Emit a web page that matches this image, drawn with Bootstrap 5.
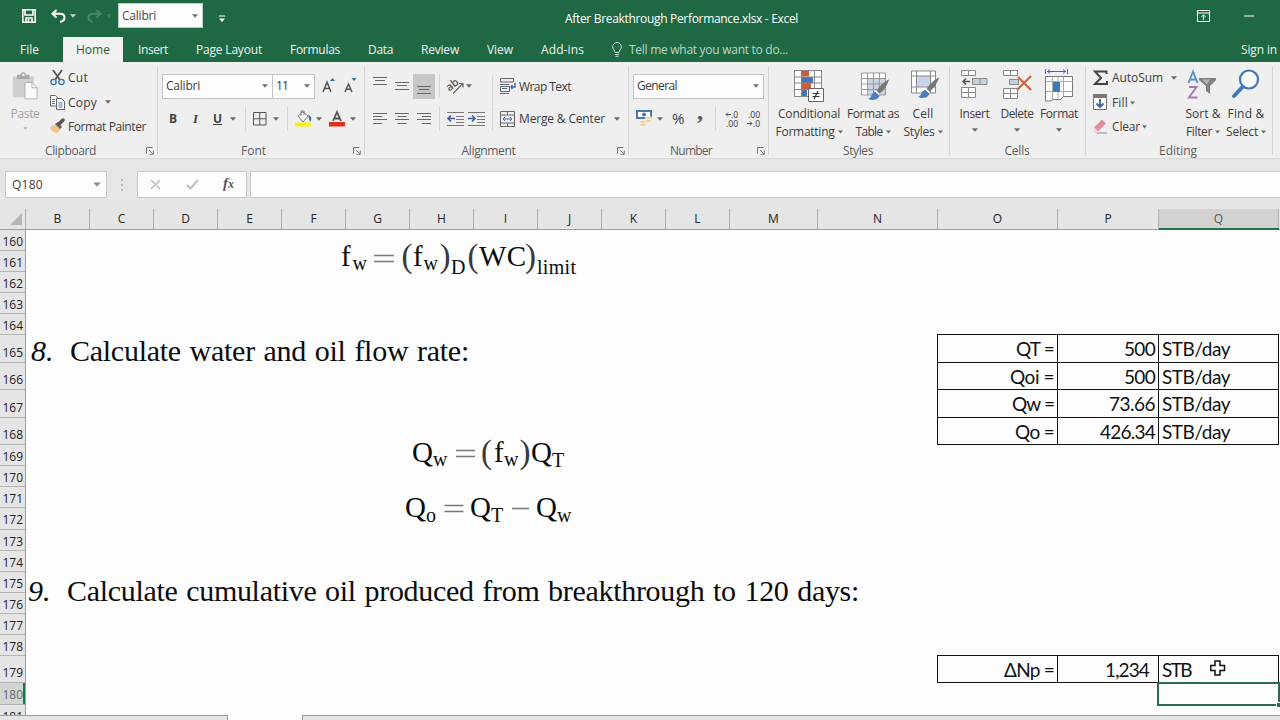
<!DOCTYPE html>
<html lang="en">
<head>
<meta charset="utf-8">
<meta name="viewport" content="width=device-width, initial-scale=1">
<title>After Breakthrough Performance.xlsx - Excel</title>
<link rel="stylesheet" href="https://cdn.jsdelivr.net/npm/bootstrap@5.3.0/dist/css/bootstrap.min.css">
<style>
:root{--xl:#1e6844}
body{width:1280px;height:720px;font-family:"Open Sans","Noto Sans",sans-serif;font-size:12px;line-height:16px;color:#3c3c3c;background:#e5e5e5}
svg{display:block;flex:none;overflow:visible}
span,a{white-space:nowrap}
.app{width:1280px;height:720px}
.g{display:grid;align-items:center;justify-items:start}
/* title bar */
.titlebar{height:37px;background:var(--xl);color:#fff;grid-template-columns:21px 30px 19px 17px 19px 12px 101px 346px 632px 47px 36px}
.titlebar>*{margin-top:-6px}
.titlebar .ttl{margin-top:1px}
.qfont{width:85px;height:25px;background:#fdfdfd;border:1px solid #b9cfc2;color:#444;padding:0 4px 0 3px}
/* tabs */
.tabs{height:25px;background:var(--xl);color:#eef5f0;grid-template-columns:20px 43px 75px 58px 94px 78px 53px 66px 54px 71px 17px 612px 39px}
.tabs .home{background:#f1f1f1;color:#2a5f45;width:60px;height:25px;padding:5px 0 0 13px}
.tabs .dim{color:#bcd8c8}
/* ribbon */
.ribbon{height:97px;background:#efefef;border-bottom:1px solid #dadada}
.grp{position:relative;height:96px;padding-top:4px}
.grp::after{content:"";position:absolute;right:0;top:5px;height:88px;width:1px;background:#d2d2d2}
.grp .cap{position:absolute;left:0;right:0;bottom:-2px;color:#5c5c5c;height:17px}
.launch{position:absolute;right:4px;bottom:3px}
.w1{width:158px}.w2{width:207px}.w3{width:264px}.w4{width:140px}.w5{width:181px}.w6{width:136px}.w7{width:187px}
.r1{height:40px}.r2{height:25px}
.clip{grid-template-columns:50px 18px 35px 20px;grid-template-rows:24px 24px 24px}
.fbox{height:25px;background:#fdfdfd;border:1px solid #c3c3c3;padding:0 4px 0 3px}
.bigbtn{height:74px}
.bigbtn .ico{height:40px;padding-top:3px}
.bigbtn .ln{height:17px;gap:3px}
.font1{grid-template-columns:4px 111px 49px 22px 20px}
.font2{grid-template-columns:12px 23px 21px 16px 15px 8px 20px 14px 8px 24px 10px 21px 10px}
.font2 b,.font2 i{color:#444}
.fb{border-left-width:0}
.vsep{width:1px;height:24px;background:#d5d5d5}
.al1,.al2{grid-template-columns:8px 22px 18px 26px 8px 19px 26px 8px 19px 95px 10px}
.al2 .c3{padding-left:4px}
.hot{width:22px;height:25px;background:#c6c6c6;padding:0 4px}
.num2{grid-template-columns:7px 21px 15px 24px 19px 8px 22px 18px}
.dec b{font-weight:400;font-size:8.5px;line-height:9px;height:9px;color:#333}
.edit{grid-template-columns:7px 19px 60px;grid-template-rows:24px 24px 24px}
.clip>.low,.edit .low{padding-top:1px}
/* formula bar */
.fbar{height:46px;background:#e6e6e6;padding:12px 0 0 5px}
.fbar .bx{height:27px;background:#fdfdfd;border:1px solid #c8c8c8}
/* headers */
.heads{height:25px;background:#e5e5e5;border-bottom:1px solid #9d9d9d;color:#222}
.heads div{height:20px;margin-top:4px;border-right:1px solid #b0b0b0;text-align:center;padding-top:2px}
.c26{width:26px}.c64{width:64px}.c88{width:88px}.c120{width:120px}.c101{width:101px}
.heads .selc{background:#d2d2d2;color:#555;box-shadow:0 2px 0 #217346;height:19px;margin-top:4px}
.rows{width:26px;height:485px;background:#e5e5e5;border-right:1px solid #9d9d9d;overflow:hidden;color:#222}
.rows div{height:21px;flex:none;border-bottom:1px solid #b3b3b3;padding-left:2.5px;display:flex;align-items:flex-end;line-height:17px}
.rows .h28{height:28px;line-height:19px}.rows .h27{height:27px;line-height:19px}.rows .h22{height:22px;line-height:19px}
.rows .selr{background:#d2d6d3;color:#666;box-shadow:inset -2px 0 0 #217346}
.canvas{height:485px;background:#fdfdfd;position:relative;overflow:hidden}
.notes{width:911px;font-family:"Liberation Serif",serif;font-size:30px;line-height:34px;color:#0c0c0c}
.notes span{word-spacing:1.5px}
.notes text{font-family:"Liberation Serif",serif;font-size:29px;fill:#0c0c0c}
.notes .sb{font-size:20px}
.notes .par{font-size:33px;fill:#3a3a3a}
.eqs{stroke:#777;stroke-width:1.3}
.cells{font-family:Lato,sans-serif;font-size:19px;line-height:27px;color:#111}
.tb{border-top:1px solid #111;border-left:1px solid #111;width:342px}
.tb>div{grid-template-columns:120px 101px 120px;height:27px;border-bottom:1px solid #111}
.tb>.t28{height:28px}
.tb>div>span{border-right:1px solid #111;width:100%;height:100%;padding:0 3px;text-align:right;overflow:hidden}
.tb>div>span:last-child{text-align:left}
.cells .t0{margin-top:104px}.cells .t1{margin-top:210px}
.tb .acct{padding-right:9px!important}
.selbox{position:absolute;left:1131px;top:452px;width:123px;height:24px;border:2px solid #2c6b4f}
.selbox::after{content:"";position:absolute;right:-3px;bottom:-3px;width:5px;height:5px;background:#2c6b4f;border:solid #fdfdfd;border-width:1px 0 0 1px}
.cursor{position:absolute;left:1184px;top:430px}
.foot{height:5px;background:#fdfdfd}
.foot div{height:5px;background:#e5e5e5;border-top:1px solid #9d9d9d}
.f1{width:228px;border-right:1px solid #9d9d9d}.f2{width:978px;border-left:1px solid #9d9d9d}
</style>
<script src="https://cdn.jsdelivr.net/npm/bootstrap@5.3.0/dist/js/bootstrap.bundle.min.js"></script>
</head>
<body>
<svg width="0" height="0" class="position-absolute">
<defs>
<symbol id="car" viewBox="0 0 6 4"><path d="M0 .3h6L3 3.7z" fill="currentColor" opacity=".75"/></symbol>
<symbol id="lau" viewBox="0 0 8 8"><path d="M.5 6.500V.5h6M3 3l4 4M7.300 3.500v3.800H3.500" fill="none" stroke="#777"/></symbol>
<symbol id="brush" viewBox="0 0 24 24"><path d="M23 1C18 3 13 8 10 13l3 3C18 12 21 7 23 1z" fill="#777"/><path d="M9 14c-5 0-3 6-8 7 5 3 12 1 12-4z" fill="#4a7fc0"/><path d="M9 13l4 4" stroke="#fff" stroke-width="1.500"/></symbol>
</defs>
</svg>
<div class="app d-flex flex-column overflow-hidden">
<header>
<div class="titlebar g">
<i></i>
<svg width="16" height="16" viewBox="0 0 16 16" fill="none" stroke="#fff" stroke-width="1.600"><path d="M1.800 1.800h12.400v12.400H1.800zM4 2v5h8V2M5 14v-4h6v4M7.500 11v3"/></svg>
<svg width="15" height="14" viewBox="0 0 15 14" fill="none" stroke="#fff" stroke-width="2"><path d="M5.500 1L1.500 4.800l4 3.800M2 4.800h7c6 0 6 7 0 8"/></svg>
<svg width="6" height="4" color="#fff"><use href="#car"/></svg>
<svg width="15" height="14" viewBox="0 0 15 14" fill="none" stroke="#498468" stroke-width="2"><path d="M9.500 1l4 3.800-4 3.800M13 4.800H6c-6 0-6 7 0 8"/></svg>
<svg width="6" height="4" color="#498468"><use href="#car"/></svg>
<div class="qfont d-flex align-items-center justify-content-between"><span data-w="33">Calibri</span><svg width="6" height="4"><use href="#car"/></svg></div>
<svg width="6" height="8" viewBox="0 0 6 8" class="mt-0"><path d="M0 1h6" stroke="#fff"/><path d="M0 3.500h6L3 7z" fill="#fff"/></svg>
<span class="ttl" data-w="232">After Breakthrough Performance.xlsx - Excel</span>
<svg width="13" height="12" viewBox="0 0 13 12" fill="none" stroke="#fff" stroke-width="1"><path d="M.5.5h12v11H.5zM.5 3h12M6.500 10V5M4.300 7l2.200-2.200L8.700 7"/></svg>
<svg width="10" height="2" viewBox="0 0 10 2"><path d="M0 1h10" stroke="#fff"/></svg>
</div>
<nav class="tabs g">
<i></i><span data-w="18" style="padding-top:1px">File</span>
<span class="home" ><span data-w="33">Home</span></span>
<span data-w="29">Insert</span><span data-w="65">Page Layout</span><span data-w="49">Formulas</span><span data-w="24">Data</span><span data-w="37">Review</span><span data-w="25">View</span><span data-w="42">Add-ins</span>
<svg width="10" height="15" viewBox="0 0 10 15" fill="none" stroke="#cfe3d8"><path d="M3 10.500c0-2-2.300-3-2.300-5.700a4.300 4.300 0 0 1 8.600 0c0 2.700-2.300 3.700-2.300 5.700zM3 12.500h4M3.500 14.300h3"/></svg>
<span class="dim" data-w="158">Tell me what you want to do...</span><span data-w="35">Sign in</span>
</nav>
</header>

<div class="ribbon d-flex">
<section class="grp w1">
<div class="clip g">
<div class="bigbtn" style="grid-row:1/4;align-self:start;width:50px;color:#a3a3a3">
<div class="ico ps-0"><svg width="30" height="33" viewBox="0 0 30 33" class="ms-2 ps-1"><path d="M1 6h24v24H1z" fill="#cfcdcf"/><path d="M6 9V4h4c0-4 6-4 6 0h4v5z" fill="#a9a9a9"/><circle cx="13" cy="4" r="1.500" fill="#eee"/><path d="M15 13h8l6 6v13H15z" fill="#fafafa" stroke="#aaa"/><path d="M23 13v6h6" fill="none" stroke="#aaa"/></svg></div>
<div class="ln d-flex justify-content-center"><span data-w="28">Paste</span></div>
<div class="d-flex justify-content-center pt-1"><svg width="5" height="3"><use href="#car"/></svg></div>
</div>
<svg width="15" height="16" viewBox="0 0 15 16" fill="none"><path d="M3 0l7 10M12 0L5 10" stroke="#555" stroke-width="1.800"/><circle cx="3.500" cy="12" r="2.600" stroke="#3f78b8" stroke-width="1.400"/><circle cx="11.500" cy="12" r="2.600" stroke="#3f78b8" stroke-width="1.400"/></svg>
<span data-w="19">Cut</span><i></i>
<svg width="15" height="15" viewBox="0 0 15 15" fill="#fafafa" stroke="#666"><path d="M.5.5h5l2.500 2.500v8H.5z"/><path d="M6.500 3.500h5l3 3v8h-8z"/><path d="M2 4.500h3M2 6.500h3M2 8.500h3M8.500 8h4M8.500 10h4M8.500 12h4" stroke="#4a7ab5"/></svg>
<span class="low" data-w="28">Copy</span><svg width="6" height="4" style="margin-left:2px"><use href="#car"/></svg>
<svg width="15" height="15" viewBox="0 0 15 15"><path d="M0 8l6-3 5 5-4 4c-3 0-6-2-7-6z" fill="#efc68f"/><path d="M5 5l3-2 4 5-2 2z" fill="#6a6260"/><path d="M9 5l4-4" stroke="#555" stroke-width="3.500" stroke-linecap="round"/></svg>
<span class="low" data-w="77">Format Painter</span><i></i>
</div>
<div class="cap ps-5"><span data-w="50" style="margin-left:-3px">Clipboard</span></div><svg class="launch" width="8" height="8"><use href="#lau"/></svg>
</section>

<section class="grp w2">
<div class="g r1 font1"><i></i>
<div class="fbox w-100 d-flex align-items-center justify-content-between"><span data-w="33">Calibri</span><svg width="6" height="4"><use href="#car"/></svg></div>
<div class="fbox fb d-flex align-items-center justify-content-between" style="width:42px"><span data-w="11">11</span><svg width="6" height="4"><use href="#car"/></svg></div>
<svg width="14" height="16" viewBox="0 0 14 16"><path d="M1 14L5 4l4 10M2.500 10.500h5" fill="none" stroke="#555" stroke-width="1.500"/><path d="M8 3l2.500-3L13 3z" fill="#3f6ca8"/></svg>
<svg width="14" height="16" viewBox="0 0 14 16"><path d="M1 14l3.500-8L8 14M2.500 11.300h4" fill="none" stroke="#555" stroke-width="1.500"/><path d="M7.500 0h5L10 3z" fill="#3f6ca8"/></svg>
</div>
<div class="g r2"><div class="g font2"><i></i><b style="margin-left:-1px">B</b><i class="fw-bold" style="font-family:'Liberation Serif',serif;font-size:13px">I</i><b style="margin-left:-1px"><u>U</u></b><svg width="6" height="4"><use href="#car"/></svg><div class="vsep"></div>
<svg width="14" height="14" viewBox="0 0 14 14" fill="none" stroke="#555"><path d="M.5.5h12.500v12.500H.5zM6.750.5v12.500M.5 6.750h12.500"/></svg>
<svg width="6" height="4"><use href="#car"/></svg><div class="vsep"></div>
<svg width="17" height="17" viewBox="0 0 17 17"><path d="M3 6l5-4 5 4-5 6z" fill="#fff" stroke="#777"/><path d="M6 6V1h3v4" fill="none" stroke="#777"/><path d="M13 5c4 1 4 5 2 7z" fill="#3f6ca8"/><path d="M0 12.500h16v4H0z" fill="#fdee10"/></svg>
<svg width="6" height="4" style="margin-left:-3px"><use href="#car"/></svg>
<svg width="16" height="16" viewBox="0 0 16 16"><path d="M4 10L8 1l4 9M5.500 7.500h5" fill="none" stroke="#555" stroke-width="1.800"/><path d="M0 11h16v4.500H0z" fill="#e03018"/></svg>
<svg width="6" height="4"><use href="#car"/></svg></div></div>
<div class="cap text-center" style="right:16px"><span data-w="24">Font</span></div><svg class="launch" width="8" height="8"><use href="#lau"/></svg>
</section>

<section class="grp w3">
<div class="g r1 al1"><i></i>
<svg width="14" height="11" viewBox="0 0 14 11" stroke="#666" style="margin-top:-7px"><path d="M0 .5h14M2 3.500h10M0 7.500h14"/></svg>
<svg width="14" height="8" viewBox="0 0 14 8" stroke="#666" style="margin-top:-1px"><path d="M0 .5h14M2 3.500h10M0 7.500h14"/></svg>
<div class="hot"><svg width="14" height="25" viewBox="0 0 14 25" stroke="#666"><path d="M0 12.500h14M2 15.500h10M0 19.500h14"/></svg></div>
<div class="vsep"></div>
<svg width="17" height="16" viewBox="0 0 17 16"><text x="0" y="11" transform="rotate(-38 5 9)" font-size="11" font-weight="600" fill="#555">ab</text><path d="M6 15.500L15.500 6M12 5.500h4v4" fill="none" stroke="#666" stroke-width="1.200"/></svg>
<svg width="6" height="4"><use href="#car"/></svg><div class="vsep" style="height:30px;align-self:end"></div>
<svg width="16" height="16" viewBox="0 0 16 16" fill="none" stroke="#666"><path d="M.5.5h13v3.500H.5zM0 6.500h9M.5 8.500h9v5H.5zM0 15.500h9"/><path d="M2 10.500h5" stroke="#3f6ca8"/><path d="M15 5v4h-4M12.500 7L11 9l1.500 2" stroke="#3f6ca8" stroke-width="1.400"/></svg>
<span data-w="51" style="padding-top:1px">Wrap Text</span><i></i>
</div>
<div class="g r2 al2"><i></i>
<svg width="14" height="11" viewBox="0 0 14 11" stroke="#666"><path d="M0 .5h14M0 3.500h9M0 6.500h14M0 10.500h9"/></svg>
<svg width="14" height="11" viewBox="0 0 14 11" stroke="#666"><path d="M0 .5h14M2.500 3.500h9M0 6.500h14M2.500 10.500h9"/></svg>
<div class="c3"><svg width="14" height="11" viewBox="0 0 14 11" stroke="#666"><path d="M0 .5h14M5 3.500h9M0 6.500h14M5 10.500h9"/></svg></div>
<div class="vsep"></div>
<svg width="17" height="14" viewBox="0 0 17 14" fill="none" stroke="#777"><path d="M0 .5h17M9 4.500h8M9 7.500h8M9 10.500h8M0 13.500h17"/><path d="M1 6.500h7M4 3.500l-3 3 3 3" stroke="#3f5f9a" stroke-width="1.600"/></svg>
<svg width="17" height="14" viewBox="0 0 17 14" fill="none" stroke="#777" style="margin-left:2px"><path d="M0 .5h17M9 4.500h8M9 7.500h8M9 10.500h8M0 13.500h17"/><path d="M0 6.500h7M4 3.500l3 3-3 3" stroke="#3f5f9a" stroke-width="1.600"/></svg>
<div class="vsep"></div>
<svg width="15" height="16" viewBox="0 0 15 16" fill="none" stroke="#666"><path d="M.5.5h14v15H.5zM.5 4h14M.5 12h14M7.500.5V4M7.500 12v3.500"/><path d="M3 8h9M5 6L3 8l2 2M10 6l2 2-2 2" stroke="#3f6ca8"/></svg>
<span data-w="85">Merge &amp; Center</span><svg width="6" height="4"><use href="#car"/></svg>
</div>
<div class="cap text-center" style="right:17px"><span data-w="53">Alignment</span></div><svg class="launch" width="8" height="8"><use href="#lau"/></svg>
</section>

<section class="grp w4">
<div class="r1 d-flex align-items-center" style="padding-left:4px"><div class="fbox d-flex align-items-center justify-content-between" style="width:131px"><span data-w="39">General</span><svg width="6" height="4"><use href="#car"/></svg></div></div>
<div class="g r2 num2"><i></i>
<svg width="17" height="17" viewBox="0 0 17 17"><path d="M1 1h14v7H1z" fill="#fff" stroke="#4a75ae" stroke-width="2"/><circle cx="8" cy="4.500" r="2" fill="#4a75ae"/><g fill="#ecd3a4" stroke="#fff" stroke-width=".5"><ellipse cx="12.500" cy="8" rx="3.500" ry="1.800"/><ellipse cx="12.500" cy="11" rx="3.500" ry="1.800"/><ellipse cx="7" cy="12" rx="3.500" ry="1.800"/><ellipse cx="7" cy="14.800" rx="3.500" ry="1.800"/></g></svg>
<svg width="6" height="4"><use href="#car"/></svg><span style="font-size:15px;margin-top:-1px">%</span><span class="fw-bold" style="font-family:'Liberation Serif',serif;font-size:24px;margin-top:-15px;margin-left:1px;color:#555">,</span><div class="vsep"></div>
<div class="dec d-flex flex-column align-items-end" style="width:15px"><div class="d-flex align-items-center"><svg width="6" height="5" viewBox="0 0 6 5"><path d="M1 2.500h5M3 .5l-2 2 2 2" fill="none" stroke="#555"/></svg><b>.0</b></div><b>.00</b></div>
<div class="dec d-flex flex-column align-items-end" style="width:15px"><b>.00</b><div class="d-flex align-items-center"><svg width="6" height="5" viewBox="0 0 6 5"><path d="M0 2.500h5M3 .5l2 2-2 2" fill="none" stroke="#555"/></svg><b>.0</b></div></div>
</div>
<div class="cap text-center" style="right:16px"><span data-w="41">Number</span></div><svg class="launch" width="8" height="8"><use href="#lau"/></svg>
</section>

<section class="grp w5">
<div class="d-flex">
<div class="bigbtn" style="width:80px"><div class="ico d-flex justify-content-center"><svg width="30" height="33" viewBox="0 0 30 33"><path d="M.5 1.500h27v26H.5z" fill="#fff"/><path d="M8 1.500h7v6H8zM8 14h9v6H8z" fill="#d05a3a"/><path d="M8 8h11v6H8zM8 20h5v7H8z" fill="#4a72b0"/><path d="M.5 1.500h27v26H.5zM7.500 1.500v26M20.500 1.500v26M.5 8h27M.5 14h27M.5 20.500h27" fill="none" stroke="#888"/><path d="M14.500 19.500h15v13h-15z" fill="#fff" stroke="#666"/><path d="M18.500 24.500h7M18.500 27.500h7M24 22l-4 8" stroke="#333" stroke-width="1.200"/></svg></div>
<div class="ln d-flex justify-content-center"><span data-w="61">Conditional</span></div><div class="ln d-flex justify-content-center align-items-center"><span data-w="58">Formatting</span><svg width="5" height="4"><use href="#car"/></svg></div></div>
<div class="bigbtn" style="width:48px"><div class="ico d-flex justify-content-center"><svg width="30" height="33" viewBox="0 0 30 33" style="margin-left:4px"><path d="M1.500 4h24v22h-24z" fill="#fff"/><path d="M7.500 9.500h18V26h-18z" fill="#c9d3e2"/><path d="M1.500 4h24v22h-24zM7.500 4v22M13.500 4v22M19.500 4v22M1.500 9.500h24M1.500 15h24M1.500 20.500h24" fill="none" stroke="#999"/><use href="#brush" x="7" y="9" width="23" height="24"/></svg></div>
<div class="ln d-flex justify-content-center"><span data-w="51">Format as</span></div><div class="ln d-flex justify-content-center align-items-center"><span data-w="26">Table</span><svg width="5" height="4"><use href="#car"/></svg></div></div>
<div class="bigbtn" style="width:52px"><div class="ico d-flex justify-content-center"><svg width="30" height="33" viewBox="0 0 30 33" style="margin-left:4px"><path d="M1.500 2h24v22h-24z" fill="#fff"/><path d="M7 7h14v11H7z" fill="#c9d3e9"/><path d="M1.500 2h24v22h-24zM6.500 2v22M20.500 2v22M1.500 7h24M1.500 18h24" fill="none" stroke="#888"/><use href="#brush" x="7" y="7" width="23" height="24"/></svg></div>
<div class="ln d-flex justify-content-center"><span data-w="20">Cell</span></div><div class="ln d-flex justify-content-center align-items-center"><span data-w="30">Styles</span><svg width="5" height="4"><use href="#car"/></svg></div></div>
</div>
<div class="cap text-center" style="right:3px"><span data-w="29">Styles</span></div>
</section>

<section class="grp w6">
<div class="d-flex" style="padding-left:3px">
<div class="bigbtn" style="width:43px"><div class="ico d-flex justify-content-center"><svg width="27" height="32" viewBox="0 0 27 32" fill="#fff" stroke="#888"><path d="M.5 1.500h14v5H.5zM7.500 1.500v5M.5 18.500h14v10H.5zM7.500 18.500v10M.5 23.500h14"/><path d="M11.500 9.500h14.500v6H11.500zM19 9.500v6" fill="#c5d2dc"/><path d="M2 12.500h7M5 9.500l-3 3 3 3" fill="none" stroke="#555" stroke-width="1.600"/></svg></div><div class="ln d-flex justify-content-center"><span data-w="29">Insert</span></div><div class="d-flex justify-content-center" style="padding-top:5px"><svg width="6" height="4"><use href="#car"/></svg></div></div>
<div class="bigbtn" style="width:42px"><div class="ico d-flex justify-content-center"><svg width="29" height="32" viewBox="0 0 29 32" fill="#fff" stroke="#888"><path d="M.5 1.500h14v5H.5zM7.500 1.500v5M.5 19.500h14v10H.5zM7.500 19.500v10M.5 24.500h14"/><path d="M6.500 10.500h9v5h-9z" fill="#c5d2dc"/><path d="M15 8l13 13M28 7L14 21" stroke="#d2623c" stroke-width="2.200"/></svg></div><div class="ln d-flex justify-content-center"><span data-w="32">Delete</span></div><div class="d-flex justify-content-center" style="padding-top:5px"><svg width="6" height="4"><use href="#car"/></svg></div></div>
<div class="bigbtn" style="width:42px"><div class="ico d-flex justify-content-center"><svg width="28" height="33" viewBox="0 0 28 33" fill="#fff" stroke="#777"><path d="M.5 7.500h27v20H18l-2 3H8l-2 1.500H.5z"/><path d="M7.500 7.500v23M18.500 7.500v20M.5 12.500h27M.5 22.500h27M13 7.500v5M13 22.500v7" stroke="#aaa"/><path d="M8 13h7v10H8z" fill="#3f78b8" stroke="none"/><path d="M.5 0v5M22.500 0v5M2 2.500h19M5 .5l-2.500 2L5 4.500M18 .5l2.500 2-2.500 2" fill="none" stroke="#3f6ca8"/></svg></div><div class="ln d-flex justify-content-center"><span data-w="37">Format</span></div><div class="d-flex justify-content-center" style="padding-top:5px"><svg width="6" height="4"><use href="#car"/></svg></div></div>
</div>
<div class="cap text-center" style="right:2px"><span data-w="24">Cells</span></div>
</section>

<section class="grp w7">
<div class="d-flex">
<div class="g edit"><i></i>
<svg width="15" height="16" viewBox="0 0 15 16"><path d="M13.500 4V1.500H2L8 8l-6 6h12v-3" fill="none" stroke="#444" stroke-width="2"/></svg>
<div class="d-flex align-items-center"><span data-w="50">AutoSum</span><svg width="6" height="4" style="margin-left:8px"><use href="#car"/></svg></div><i></i>
<svg width="14" height="16" viewBox="0 0 14 16"><path d="M.5.5h13v15H.5z" fill="#fff" stroke="#777"/><path d="M1 1h12v3H1z" fill="#777"/><path d="M7 5v8M3.500 9.500L7 13l3.500-3.500" fill="none" stroke="#3f6ca8" stroke-width="2"/></svg>
<div class="low d-flex align-items-center"><span data-w="15">Fill</span><svg width="5" height="4" style="margin-left:2px"><use href="#car"/></svg></div><i></i>
<svg width="15" height="15" viewBox="0 0 15 15"><path d="M9 .5l4 4-8 8-4-4z" fill="#e58c9b"/><path d="M1 8.500l4 4-1.500 1.500H1L0 11z" fill="#f6d3da"/><path d="M4 14h10" stroke="#888"/></svg>
<div class="low d-flex align-items-center"><span data-w="27">Clear</span><svg width="5" height="4" style="margin-left:2px"><use href="#car"/></svg></div>
</div>
<div class="bigbtn" style="width:44px;margin-left:9px"><div class="ico d-flex justify-content-center"><svg width="30" height="33" viewBox="0 0 30 33" style="margin-left:-2px"><path d="M1.500 14L6 2.500 10.500 14M3 10.500h6" fill="none" stroke="#5b8fc8" stroke-width="1.900"/><path d="M2 18h7.500L2 28.500h8.500" fill="none" stroke="#a477b5" stroke-width="1.900"/><path d="M12 9h17v2l-6 6v8l-4-3v-5l-7-6z" fill="#808080"/><path d="M15 10.500h8l-3 5z" fill="#b5b5b5"/></svg></div><div class="ln d-flex justify-content-center"><span data-w="34">Sort &amp;</span></div><div class="ln d-flex justify-content-center align-items-center"><span data-w="25">Filter</span><svg width="5" height="4"><use href="#car"/></svg></div></div>
<div class="bigbtn" style="width:42px"><div class="ico d-flex justify-content-center"><svg width="28" height="30" viewBox="0 0 28 30"><circle cx="17" cy="10.500" r="9" fill="#fbfbfb" stroke="#3f78b8" stroke-width="2.200"/><path d="M10.500 18L2 27" stroke="#3f78b8" stroke-width="4" stroke-linecap="round"/></svg></div><div class="ln d-flex justify-content-center"><span data-w="36">Find &amp;</span></div><div class="ln d-flex justify-content-center align-items-center"><span data-w="31">Select</span><svg width="5" height="4"><use href="#car"/></svg></div></div>
</div>
<div class="cap text-center" style="right:3px"><span data-w="37">Editing</span></div>
</section>
</div>

<div class="fbar d-flex">
<div class="bx d-flex align-items-center justify-content-between" style="width:102px;padding:0 5px 0 6px"><span data-w="30">Q180</span><svg width="8" height="5" color="#666"><use href="#car"/></svg></div>
<svg width="2" height="14" viewBox="0 0 2 14" style="margin:7px 14px 0 14px"><path d="M0 2h2M0 7h2M0 12h2" stroke="#aaa" stroke-width="1.500"/></svg>
<div class="bx d-flex align-items-center" style="width:110px;padding-left:12px"><svg width="11" height="11" viewBox="0 0 11 11"><path d="M1 1l9 9M10 1l-9 9" stroke="#c0c0c0" stroke-width="1.500"/></svg><svg width="13" height="11" viewBox="0 0 13 11" style="margin-left:25px"><path d="M1 6l3.500 3.500L12 1" fill="none" stroke="#c0c0c0" stroke-width="2"/></svg><i style="font:italic bold 15px 'Liberation Serif',serif;color:#555;margin-left:24px;margin-top:-2px">f<small style="font-size:12px">x</small></i></div>
<div class="bx flex-fill" style="margin-left:3px;border-right:0"></div>
</div>

<div class="heads d-flex">
<div class="c26"><svg width="12" height="12" viewBox="0 0 12 12" style="margin:2px 0 0 10px"><path d="M12 0v12H0z" fill="#b5b5b5"/></svg></div>
<div class="c64">B</div><div class="c64">C</div><div class="c64">D</div><div class="c64">E</div><div class="c64">F</div><div class="c64">G</div><div class="c64">H</div><div class="c64">I</div><div class="c64">J</div><div class="c64">K</div><div class="c64">L</div><div class="c88">M</div><div class="c120">N</div><div class="c120">O</div><div class="c101">P</div><div class="c120 selc">Q</div>
</div>

<main class="d-flex">
<div class="rows d-flex flex-column">
<div>160</div><div>161</div><div>162</div><div>163</div><div>164</div><div class="h28">165</div><div class="h27">166</div><div class="h28">167</div><div class="h27">168</div><div>169</div><div>170</div><div>171</div><div class="h22">172</div><div>173</div><div>174</div><div>175</div><div>176</div><div>177</div><div>178</div><div class="h27">179</div><div class="h22 selr">180</div><div>181</div>
</div>
<div class="canvas d-flex flex-fill">
<div class="notes">
<svg width="240" height="60" viewBox="340 230 240 60" style="margin-left:314px">
<text x="341" y="266">f</text><text class="sb" x="352.500" y="269.500">w</text><path class="eqs" d="M374 255.500h20M374 261.500h20"/>
<text class="par" x="401.500" y="266.500">(</text><text x="413" y="266">f</text><text class="sb" x="423.500" y="269.500">w</text><text class="par" x="439.500" y="266.500">)</text><text class="sb" x="451" y="274">D</text><text class="par" x="467.500" y="266.500">(</text><text x="479" y="266" textLength="47">WC</text><text class="par" x="525" y="266.500">)</text><text class="sb" x="537" y="274" textLength="39">limit</text></svg>
<div class="d-flex" style="margin-top:44px;padding-left:5px"><i style="width:39px">8.</i><span data-w="398">Calculate water and oil flow rate:</span></div>
<svg width="180" height="110" viewBox="400 430 180 110" style="margin-left:374px;margin-top:62px">
<text x="412" y="462">Q</text><text class="sb" x="433" y="466">w</text><path class="eqs" d="M456 450.500h19M456 456.500h19"/><text class="par" x="481" y="462.500">(</text><text x="494" y="462">f</text><text class="sb" x="504" y="466">w</text><text class="par" x="519.500" y="462.500">)</text><text x="531" y="462">Q</text><text class="sb" x="552" y="466.500">T</text>
<text x="405" y="517">Q</text><text class="sb" x="426" y="522">o</text><path class="eqs" d="M444.500 505.500h19M444.500 511.500h19M512 508.500h17"/><text x="470" y="517">Q</text><text class="sb" x="491" y="522">T</text><text x="536" y="517">Q</text><text class="sb" x="557" y="522">w</text></svg>
<div class="d-flex" style="margin-top:34px;padding-left:2px"><i style="width:39px">9.</i><span data-w="791">Calculate cumulative oil produced from breakthrough to 120 days:</span></div>
</div>
<div class="cells">
<div class="tb t0">
<div class="g t28"><span><span data-w="37">QT =</span></span><span><span data-w="30">500</span></span><span><span data-w="67">STB/day</span></span></div>
<div class="g"><span><span data-w="43">Qoi =</span></span><span><span data-w="30">500</span></span><span><span data-w="67">STB/day</span></span></div>
<div class="g t28"><span><span data-w="41">Qw =</span></span><span><span data-w="45">73.66</span></span><span><span data-w="67">STB/day</span></span></div>
<div class="g"><span><span data-w="38">Qo =</span></span><span><span data-w="54">426.34</span></span><span><span data-w="67">STB/day</span></span></div>
</div>
<div class="tb t1"><div class="g"><span><span data-w="49">ΔNp =</span></span><span class="acct"><span data-w="43">1,234</span></span><span><span data-w="28">STB</span></span></div></div>
</div>
<div class="selbox"></div>
<svg class="cursor" width="16" height="17" viewBox="0 0 16 17"><path d="M5 1h5v4.500h4.500v5H10V15H5v-4.500H.8v-5H5z" fill="#fff" stroke="#111" stroke-width="1.500"/></svg>
</div>
</main>
<div class="foot d-flex justify-content-between"><div class="f1"></div><div class="f2"></div></div>
</div>
<script>
// tighten each label's tracking so that it fills its nominal width
document.querySelectorAll('[data-w]').forEach(function(e){
  var r=document.createRange();r.selectNodeContents(e);
  var n=r.getBoundingClientRect().width;
  e.style.letterSpacing=((+e.dataset.w+1-n)/e.textContent.length).toFixed(3)+'px';
});
</script>
</body>
</html>
